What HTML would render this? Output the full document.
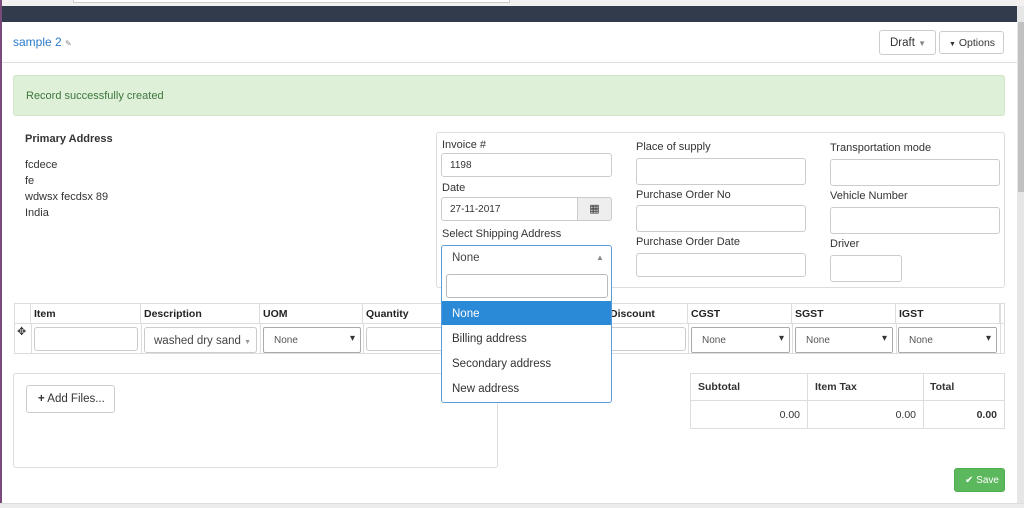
<!DOCTYPE html>
<html><head><meta charset="utf-8"><style>
*{box-sizing:border-box;margin:0;padding:0}
body{width:1024px;height:508px;overflow:hidden;background:#fff;font-family:"Liberation Sans","DejaVu Sans",sans-serif;font-size:11px;color:#333;position:relative}
.a{position:absolute}
.inp{position:absolute;border:1px solid #ccc;border-radius:3px;background:#fff}
.lbl{position:absolute;font-size:11px;color:#333}
.th{position:absolute;top:303px;height:20px;border-right:1px solid #ddd;font-weight:bold;font-size:10.5px;padding:5px 3px;color:#222}
.sel{position:absolute;border:1px solid #aaa;border-radius:2px;background:#fff;font-size:10px;color:#555;padding:7px 0 0 10px;height:26px}
.sel:after{content:"▾";position:absolute;right:5px;top:5px;font-size:10px;color:#333}
</style></head><body>
<div class="a" style="left:0;top:0;width:1024px;height:6px;background:#f2f1f0"></div>
<div class="a" style="left:73px;top:0;width:437px;height:3px;border:1px solid #ccc;border-top:none;background:#fff"></div>
<div class="a" style="left:0;top:6px;width:1018px;height:16px;background:#323b4b"></div>
<div class="a" style="left:0;top:0;width:2px;height:508px;background:#7a4a7a"></div>
<div class="a" style="left:1017px;top:6px;width:7px;height:502px;background:#e6e6e6"></div>
<div class="a" style="left:1018px;top:22px;width:6px;height:170px;background:#c1c1c1"></div>
<div class="a" style="left:0;top:503px;width:1024px;height:5px;background:#ececec;border-top:1px solid #ddd"></div>

<div class="a" style="left:13px;top:35px;font-size:12px;color:#2a7ac9">sample 2 <span style="font-size:8px;color:#888">&#9998;</span></div>
<div class="a" style="left:879px;top:30px;width:57px;height:25px;border:1px solid #ccc;border-radius:3px;font-size:11.5px;padding:6px 0 0 10px">Draft <span style="font-size:8px;color:#888">▼</span></div>
<div class="a" style="left:939px;top:31px;width:65px;height:23px;border:1px solid #ccc;border-radius:3px;font-size:10.5px;padding:5px 0 0 9px"><span style="font-size:7px">▼</span> Options</div>
<div class="a" style="left:2px;top:62px;width:1015px;height:1px;background:#e0e0e0"></div>

<div class="a" style="left:13px;top:75px;width:992px;height:41px;background:#dff0d8;border:1px solid #d0e6c6;border-radius:3px;color:#3c763d;font-size:11px;padding:14px 0 0 12px">Record successfully created</div>

<div class="a" style="left:25px;top:133px;font-weight:bold;font-size:11px">Primary Address</div>
<div class="a" style="left:25px;top:157px;font-size:11px;line-height:16px">fcdece<br>fe<br>wdwsx fecdsx 89<br>India</div>

<div class="a" style="left:436px;top:132px;width:569px;height:156px;border:1px solid #ddd;border-radius:3px"></div>
<div class="lbl" style="left:442px;top:139px">Invoice #</div>
<div class="inp" style="left:441px;top:153px;width:171px;height:24px;font-size:10px;padding:6px 0 0 8px">1198</div>
<div class="lbl" style="left:442px;top:182px">Date</div>
<div class="inp" style="left:441px;top:197px;width:171px;height:24px;font-size:10px;padding:6px 0 0 8px">27-11-2017</div>
<div class="a" style="left:577px;top:197px;width:35px;height:24px;background:#eee;border:1px solid #ccc;border-radius:0 3px 3px 0;text-align:center;padding-top:4px;font-size:11px">&#9638;</div>
<div class="lbl" style="left:442px;top:228px">Select Shipping Address</div>

<div class="lbl" style="left:636px;top:141px">Place of supply</div>
<div class="inp" style="left:636px;top:158px;width:170px;height:27px"></div>
<div class="lbl" style="left:636px;top:189px">Purchase Order No</div>
<div class="inp" style="left:636px;top:205px;width:170px;height:27px"></div>
<div class="lbl" style="left:636px;top:236px">Purchase Order Date</div>
<div class="inp" style="left:636px;top:253px;width:170px;height:24px"></div>
<div class="lbl" style="left:830px;top:142px">Transportation mode</div>
<div class="inp" style="left:830px;top:159px;width:170px;height:27px"></div>
<div class="lbl" style="left:830px;top:190px">Vehicle Number</div>
<div class="inp" style="left:830px;top:207px;width:170px;height:27px"></div>
<div class="lbl" style="left:830px;top:238px">Driver</div>
<div class="inp" style="left:830px;top:255px;width:72px;height:27px"></div>

<div class="a" style="left:14px;top:303px;width:991px;height:51px;border:1px solid #ddd"></div>
<div class="a" style="left:14px;top:323px;width:991px;height:1px;background:#ddd"></div>
<div class="a" style="left:1000px;top:303px;width:1px;height:51px;background:#ddd"></div>
<div class="th" style="left:14px;width:17px"></div>
<div class="th" style="left:31px;width:110px">Item</div>
<div class="th" style="left:141px;width:119px">Description</div>
<div class="th" style="left:260px;width:103px">UOM</div>
<div class="th" style="left:363px;width:244px">Quantity</div>
<div class="th" style="left:607px;width:81px">Discount</div>
<div class="th" style="left:688px;width:104px">CGST</div>
<div class="th" style="left:792px;width:104px">SGST</div>
<div class="th" style="left:896px;width:104px">IGST</div>
<div class="a" style="left:31px;top:323px;width:1px;height:31px;background:#ddd"></div>
<div class="a" style="left:141px;top:323px;width:1px;height:31px;background:#ddd"></div>
<div class="a" style="left:260px;top:323px;width:1px;height:31px;background:#ddd"></div>
<div class="a" style="left:363px;top:323px;width:1px;height:31px;background:#ddd"></div>
<div class="a" style="left:688px;top:323px;width:1px;height:31px;background:#ddd"></div>
<div class="a" style="left:792px;top:323px;width:1px;height:31px;background:#ddd"></div>
<div class="a" style="left:896px;top:323px;width:1px;height:31px;background:#ddd"></div>
<div class="a" style="left:17px;top:325px;font-size:11px;font-weight:bold">✥</div>
<div class="inp" style="left:34px;top:327px;width:104px;height:24px"></div>
<div class="inp" style="left:144px;top:327px;width:113px;height:26px;font-size:11.5px;color:#444;padding:7px 0 0 9px">washed dry sand <span style="font-size:7px;color:#999">▼</span></div>
<div class="sel" style="left:263px;top:327px;width:98px">None</div>
<div class="inp" style="left:366px;top:327px;width:80px;height:24px"></div>
<div class="inp" style="left:608px;top:327px;width:78px;height:24px;border-left:none"></div>
<div class="sel" style="left:691px;top:327px;width:99px">None</div>
<div class="sel" style="left:795px;top:327px;width:98px">None</div>
<div class="sel" style="left:898px;top:327px;width:99px">None</div>

<div class="a" style="left:13px;top:373px;width:485px;height:95px;border:1px solid #ddd;border-radius:3px"></div>
<div class="a" style="left:26px;top:385px;width:89px;height:28px;border:1px solid #ccc;border-radius:3px;font-size:11.5px;padding:7px 0 0 11px"><b>+</b> Add Files...</div>

<div class="a" style="left:690px;top:373px;width:315px;height:56px;border:1px solid #ddd"></div>
<div class="a" style="left:690px;top:400px;width:315px;height:1px;background:#ddd"></div>
<div class="a" style="left:807px;top:373px;width:1px;height:56px;background:#ddd"></div>
<div class="a" style="left:923px;top:373px;width:1px;height:56px;background:#ddd"></div>
<div class="a" style="left:698px;top:381px;font-weight:bold;font-size:10.5px">Subtotal</div>
<div class="a" style="left:815px;top:381px;font-weight:bold;font-size:10.5px">Item Tax</div>
<div class="a" style="left:930px;top:381px;font-weight:bold;font-size:10.5px">Total</div>
<div class="a" style="left:760px;top:409px;width:40px;text-align:right;font-size:10.5px">0.00</div>
<div class="a" style="left:876px;top:409px;width:40px;text-align:right;font-size:10.5px">0.00</div>
<div class="a" style="left:957px;top:409px;width:40px;text-align:right;font-size:10.5px;font-weight:bold">0.00</div>

<div class="a" style="left:954px;top:468px;width:51px;height:24px;background:#5cb85c;border:1px solid #4cae4c;border-radius:3px;color:#fff;font-size:10px;padding:6px 0 0 10px">✔ Save</div>

<div class="a" style="left:441px;top:245px;width:171px;height:158px;border:1px solid #5b9dd9;border-radius:3px;background:#fff"></div>
<div class="a" style="left:452px;top:252px;font-size:11.5px;color:#444">None</div>
<div class="a" style="left:596px;top:253px;font-size:8px;color:#888">▲</div>
<div class="inp" style="left:446px;top:274px;width:162px;height:24px;border-color:#bbb"></div>
<div class="a" style="left:442px;top:301px;width:169px;height:24px;background:#2b8ad8;color:#fff;font-size:11.5px;padding:7px 0 0 10px">None</div>
<div class="a" style="left:452px;top:333px;font-size:11.5px;color:#333">Billing address</div>
<div class="a" style="left:452px;top:358px;font-size:11.5px;color:#333">Secondary address</div>
<div class="a" style="left:452px;top:383px;font-size:11.5px;color:#333">New address</div>
</body></html>
